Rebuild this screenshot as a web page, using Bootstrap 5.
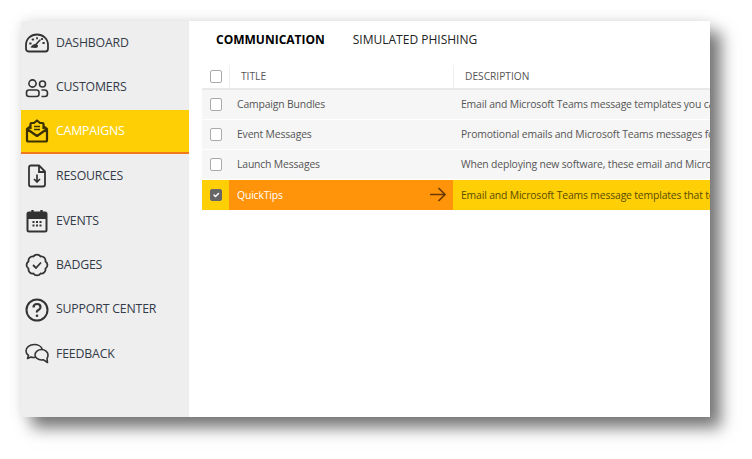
<!DOCTYPE html>
<html lang="en"><head><meta charset="utf-8"><title>Campaigns</title>
<link href="https://cdn.jsdelivr.net/npm/bootstrap@5.3.0/dist/css/bootstrap.min.css" rel="stylesheet">
<style>
html,body{height:100%;background:#fff;overflow:hidden}
body{font-family:"Open Sans","Noto Sans",sans-serif;color:#333a45}
.app-window{width:689px;height:396px;margin:21px 0 0 21px;background:#fff;overflow:hidden;box-shadow:11px 11px 15px rgba(0,0,0,.52),0 0 13px rgba(0,0,0,.1)}
.app-side{width:168px;background:#eeeeee;flex:none}
.app-side-item{height:44.4px;padding-left:4px;font-size:12.3px;color:#333a48;letter-spacing:-.17px}
.app-side-item svg{width:24px;height:24px;margin-right:7px;flex:none;color:#333}
.app-side-item.is-on{background:#ffcf06;color:#fff;border-bottom:2px solid #f0791a}
.app-main{min-width:0;padding-left:13px}
.app-tabs{height:44px;padding-left:14px;padding-top:10px;font-size:12px;gap:28px;color:#222}
.app-tabs b{color:#000;font-weight:700}
.app-table{table-layout:fixed;width:521px;margin:0;font-size:10.4px;letter-spacing:-.16px;color:#555;border-collapse:separate;border-spacing:0}
.app-table th,.app-table td{padding:1px 8px 0;white-space:nowrap;overflow:hidden;vertical-align:middle;border:0;background:transparent;color:inherit;box-shadow:none}
.app-table th{height:25px;font-weight:400;font-size:10.2px;letter-spacing:0;color:#555;border-left:1px solid #eee;border-bottom:2px solid #e9e9e9;padding:0 0 0 11px}
.app-table th:first-child{padding:0 0 0 1px;text-align:center;border-left:0}
.app-table th:last-child{padding-left:11px}
.app-table td{height:30px;background:#f6f6f6;border-bottom:1px solid #fff}
.app-table td:first-child{padding:0 0 0 1px;text-align:center}
.app-table .form-check-input{width:12.5px;height:12.5px;display:block;margin:auto;border:1px solid #aaa;border-radius:2px;box-shadow:none}
.app-table .form-check-input:checked{background-color:#666;border-color:#666}
.app-table tr.is-picked td{background:#ffcf06;color:#5a4a00;border-bottom:0}
.app-table tr.is-picked td.pick-title{background:#ff930a;color:#fff;position:relative}
.pick-arrow{position:absolute;right:7px;top:7px;width:17px;height:15px;color:#6b3a00}
</style></head>
<body>
<div class="app-window d-flex">
 <nav class="app-side">
  <div class="app-side-item d-flex align-items-center"><svg viewBox="0 0 24 24" fill="none" stroke="currentColor" stroke-width="1.800"><path d="M3.500 20.500Q1 20.500 1 17.500V14C1 7.500 6 3.500 12 3.500S23 7.500 23 14v3.500Q23 20.500 20.500 20.500Z"/><path d="M10 14.500 15 9" stroke-linecap="round" stroke-width="1.600"/><path d="M5.500 16.500c1-2 3-3.500 5-3.500 1.500 0 2.500 1 2.500 2 0 1.300-1 2-2.500 2Z" fill="currentColor" stroke="none"/><path d="M5 12.500h.8M7.500 8.500h.8M12 6.800v.8M16.800 8h.5M19 12h-.8" stroke-linecap="round"/></svg>DASHBOARD</div>
  <div class="app-side-item d-flex align-items-center"><svg viewBox="0 0 24 24" fill="none" stroke="currentColor" stroke-width="1.600"><circle cx="7.500" cy="7.500" r="3.600"/><circle cx="17.500" cy="8" r="3"/><rect x="1.500" y="14" width="12.500" height="6.500" rx="2.500"/><path d="M16.500 14h3q3 0 3 3v.8q0 2.700-2.700 2.700h-3.300"/></svg>CUSTOMERS</div>
  <div class="app-side-item is-on d-flex align-items-center"><svg viewBox="0 0 24 24" fill="none" stroke="#3a3000" stroke-width="2.200"><path d="M5.500 10V5q0-1 1-1H9l3-2.500L15 4h2.500q1 0 1 1v5" stroke-linejoin="round"/><path d="M5.500 7.500 2 10M18.500 7.500 22 10M2 10v11q0 1.500 1.500 1.500h17q1.500 0 1.500-1.500V10l-10 7Z" stroke-linejoin="round"/><path d="M9 7.500h6M9 10.500h6" stroke-width="1.700"/></svg>CAMPAIGNS</div>
  <div class="app-side-item d-flex align-items-center"><svg viewBox="0 0 24 24" fill="none" stroke="currentColor" stroke-width="1.800"><path d="M14 1.500H6q-2 0-2 2v17q0 2 2 2h12q2 0 2-2V7.500Z" stroke-linejoin="round"/><path d="M14 2v6h6"/><path d="M12 10.500v7M9 15l3 3 3-3" stroke-width="1.700"/></svg>RESOURCES</div>
  <div class="app-side-item d-flex align-items-center"><svg viewBox="0 0 24 24" fill="none" stroke="currentColor" stroke-width="2"><rect x="2.500" y="3.500" width="19" height="19" rx="1.500"/><path d="M3 5h18v4H3Z" fill="currentColor"/><path d="M7.500 1V5M16.500 1V5" stroke-width="2.400"/><path d="M7.500 13h2M11 13h2M14.500 13h2M7.500 16.500h2M11 16.500h2M14.500 16.500h2" stroke-width="2"/></svg>EVENTS</div>
  <div class="app-side-item d-flex align-items-center"><svg viewBox="0 0 24 24" fill="none" stroke="currentColor" stroke-width="1.800"><path d="M8.400 3.500A4.300 4.300 0 0 1 15.600 3.500 4.300 4.300 0 0 1 20.500 8.400 4.300 4.300 0 0 1 20.500 15.600 4.300 4.300 0 0 1 15.600 20.500 4.300 4.300 0 0 1 8.400 20.500 4.300 4.300 0 0 1 3.500 15.600 4.300 4.300 0 0 1 3.500 8.400 4.300 4.300 0 0 1 8.400 3.500Z" stroke-linejoin="round"/><path d="M8 12l3 3 5-5.500"/></svg>BADGES</div>
  <div class="app-side-item d-flex align-items-center"><svg viewBox="0 0 24 24" fill="none" stroke="currentColor" stroke-width="2"><circle cx="12" cy="12" r="10.500"/><path d="M8.500 9.500q0-3.500 3.500-3.500t3.500 3q0 2-2 3t-1.500 2.500" stroke-width="2.200"/><circle cx="12" cy="17.800" r="1.300" fill="currentColor" stroke="none"/></svg>SUPPORT CENTER</div>
  <div class="app-side-item d-flex align-items-center"><svg viewBox="0 0 24 24" fill="none" stroke="currentColor" stroke-width="1.600"><path d="M10.500 15.200C9 15.700 7 15.500 6 15L2.500 16.500 3.500 13.500C1.800 12.300 1 10.800 1 9 1 5.300 4.700 2.500 9.300 2.500 13 2.500 16.500 4.500 17.300 7.500" stroke-linejoin="round"/><path d="M16.500 7.500C13 7.500 10 9.800 10 12.700S13 18 16.500 18C17.300 18 18 18 18.500 17.800L22.500 20.500 22 16.500C22.800 15.500 23 14 23 12.700 23 9.800 20 7.500 16.500 7.500Z" stroke-linejoin="round"/></svg>FEEDBACK</div>
 </nav>
 <main class="app-main flex-grow-1">
  <div class="app-tabs d-flex"><b>COMMUNICATION</b><span>SIMULATED PHISHING</span></div>
  <table class="table app-table">
   <colgroup><col style="width:27px"><col style="width:224px"><col></colgroup>
   <thead><tr><th><input class="form-check-input" type="checkbox" aria-label="All"></th><th>TITLE</th><th>DESCRIPTION</th></tr></thead>
   <tbody>
    <tr><td><input class="form-check-input" type="checkbox" aria-label="Select"></td><td>Campaign Bundles</td><td>Email and Microsoft Teams message templates you ca</td></tr>
    <tr><td><input class="form-check-input" type="checkbox" aria-label="Select"></td><td>Event Messages</td><td>Promotional emails and Microsoft Teams messages fo</td></tr>
    <tr><td><input class="form-check-input" type="checkbox" aria-label="Select"></td><td>Launch Messages</td><td>When deploying new software, these email and Micro</td></tr>
    <tr class="is-picked"><td><input class="form-check-input" type="checkbox" checked aria-label="Select"></td><td class="pick-title">QuickTips<svg class="pick-arrow" viewBox="0 0 17 15" fill="none" stroke="currentColor" stroke-width="1.600"><path d="M1 7.500h15M9.500 1l6.500 6.500L9.500 14"/></svg></td><td>Email and Microsoft Teams message templates that te</td></tr>
   </tbody>
  </table>
 </main>
</div>
<script src="https://cdn.jsdelivr.net/npm/bootstrap@5.3.0/dist/js/bootstrap.bundle.min.js"></script>
</body></html>
